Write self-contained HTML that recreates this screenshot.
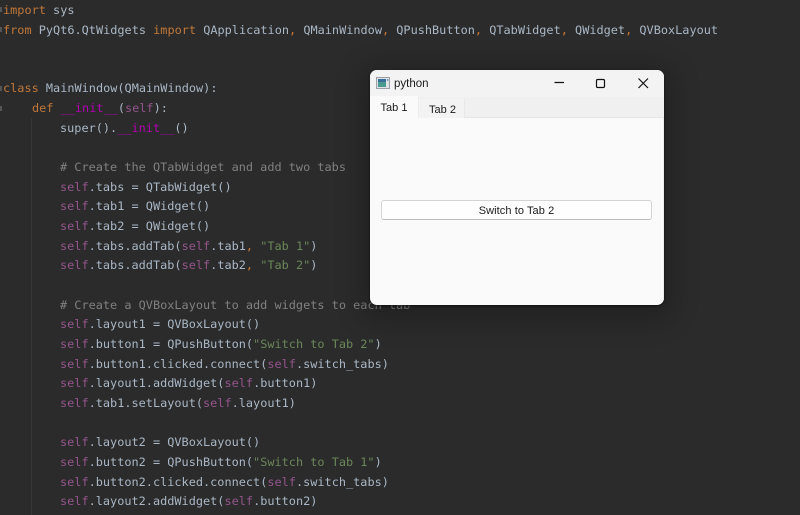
<!DOCTYPE html>
<html><head><meta charset="utf-8">
<style>
html,body{margin:0;padding:0;width:800px;height:515px;overflow:hidden;background:#2b2b2b}
#ed{position:absolute;left:0;top:0;width:800px;height:515px;font-family:"DejaVu Sans Mono","Liberation Mono",monospace;font-size:11.88px;color:#a9b7c6;filter:blur(.25px)}
.l{position:absolute;white-space:pre;line-height:20px;height:20px;left:3px}
.k{color:#c0783a}.s{color:#94558d}.m{color:#b200b2}.c{color:#808080}.g{color:#6a8759}.o{color:#cc7832}
.fold{position:absolute;left:0;width:2px;height:5px;background:#555}
.guide{position:absolute;left:31px;top:118px;width:1px;height:397px;background:#353636}
#win{position:absolute;left:370px;top:70px;width:294px;height:235px;border-radius:7px;background:#fafafa;box-shadow:0 6px 28px 8px rgba(0,0,0,.24),0 1px 2px rgba(0,0,0,.6);overflow:hidden;font-family:"Liberation Sans",sans-serif;color:#1a1a1a;font-size:11px}
#tb{position:absolute;left:0;top:0;width:294px;height:27px;background:#f3f3f3}
#bar{position:absolute;left:0;top:27px;width:294px;height:21px;background:#f0f0f0;border-bottom:1px solid #e6e6e6;box-sizing:border-box}
#t1{position:absolute;left:0;top:26px;width:49px;height:22px;background:#fafafa;border-right:1px solid #ececec;box-sizing:border-box;text-align:center;line-height:25px}
#t2{position:absolute;left:49px;top:29px;width:46px;height:19px;padding-left:2px;background:#f3f3f3;border-right:1px solid #e8e8e8;box-sizing:border-box;text-align:center;line-height:22px}
#btn{position:absolute;left:11px;top:130px;width:271px;height:20px;box-sizing:border-box;background:#fefefe;border:1px solid #d4d4d4;border-bottom-color:#bdbdbd;border-radius:3px;text-align:center;line-height:20px;font-size:11px;letter-spacing:.08px}
#title{position:absolute;left:24px;top:6px;line-height:16px;font-size:11.5px}
#edge{position:absolute;right:0;top:48px;width:1px;height:187px;background:#ececec}
</style></head><body>
<div id="ed">
<div class="guide"></div>
<div class="fold" style="top:7px"></div>
<div class="fold" style="top:27px"></div>
<div class="fold" style="top:86px"></div>
<div class="fold" style="top:106px"></div>
<div class="l" style="top:0px"><span class="k">import</span> sys</div>
<div class="l" style="top:19.5px"><span class="k">from</span> PyQt6.QtWidgets <span class="k">import</span> QApplication<span class="o">,</span> QMainWindow<span class="o">,</span> QPushButton<span class="o">,</span> QTabWidget<span class="o">,</span> QWidget<span class="o">,</span> QVBoxLayout</div>
<div class="l" style="top:78px"><span class="k">class</span> MainWindow(QMainWindow):</div>
<div class="l" style="top:98px;left:32px"><span class="k">def</span> <span class="m">__init__</span>(<span class="s">self</span>):</div>
<div class="l" style="top:118px;left:60px">super().<span class="m">__init__</span>()</div>
<div class="l c" style="top:157px;left:60px"># Create the QTabWidget and add two tabs</div>
<div class="l" style="top:177px;left:60px"><span class="s">self</span>.tabs = QTabWidget()</div>
<div class="l" style="top:196px;left:60px"><span class="s">self</span>.tab1 = QWidget()</div>
<div class="l" style="top:216px;left:60px"><span class="s">self</span>.tab2 = QWidget()</div>
<div class="l" style="top:236px;left:60px"><span class="s">self</span>.tabs.addTab(<span class="s">self</span>.tab1<span class="o">,</span> <span class="g">"Tab 1"</span>)</div>
<div class="l" style="top:255px;left:60px"><span class="s">self</span>.tabs.addTab(<span class="s">self</span>.tab2<span class="o">,</span> <span class="g">"Tab 2"</span>)</div>
<div class="l c" style="top:295px;left:60px"># Create a QVBoxLayout to add widgets to each tab</div>
<div class="l" style="top:314px;left:60px"><span class="s">self</span>.layout1 = QVBoxLayout()</div>
<div class="l" style="top:334px;left:60px"><span class="s">self</span>.button1 = QPushButton(<span class="g">"Switch to Tab 2"</span>)</div>
<div class="l" style="top:354px;left:60px"><span class="s">self</span>.button1.clicked.connect(<span class="s">self</span>.switch_tabs)</div>
<div class="l" style="top:373px;left:60px"><span class="s">self</span>.layout1.addWidget(<span class="s">self</span>.button1)</div>
<div class="l" style="top:393px;left:60px"><span class="s">self</span>.tab1.setLayout(<span class="s">self</span>.layout1)</div>
<div class="l" style="top:432px;left:60px"><span class="s">self</span>.layout2 = QVBoxLayout()</div>
<div class="l" style="top:452px;left:60px"><span class="s">self</span>.button2 = QPushButton(<span class="g">"Switch to Tab 1"</span>)</div>
<div class="l" style="top:472px;left:60px"><span class="s">self</span>.button2.clicked.connect(<span class="s">self</span>.switch_tabs)</div>
<div class="l" style="top:491px;left:60px"><span class="s">self</span>.layout2.addWidget(<span class="s">self</span>.button2)</div>
</div>
<div id="win">
<div id="tb"></div>
<svg style="position:absolute;left:6px;top:7px" width="14" height="12" viewBox="0 0 14 12">
<rect x=".5" y=".5" width="13" height="11" fill="#dfe3e6" stroke="#9aa0a5"/>
<rect x="2" y="2" width="8" height="8" fill="#4a9a90"/>
<rect x="2" y="2" width="8" height="3" fill="#3a6f9c"/>
<rect x="11" y="2" width="1.5" height="2" fill="#7fa0b5"/>
</svg>
<div id="title">python</div>
<svg style="position:absolute;left:180px;top:0" width="114" height="27" viewBox="0 0 114 27" fill="none" stroke="#111" stroke-width="1.2">
<path d="M4.5 12.5H14"/>
<rect x="46.5" y="9.5" width="8" height="8" rx="1.2"/>
<path d="M88.5 8.5L98 18M98 8.5L88.5 18"/>
</svg>
<div id="bar"></div>
<div id="t2">Tab 2</div>
<div id="t1">Tab 1</div>
<div id="edge"></div>
<div id="btn">Switch to Tab 2</div>
</div>
</body></html>
